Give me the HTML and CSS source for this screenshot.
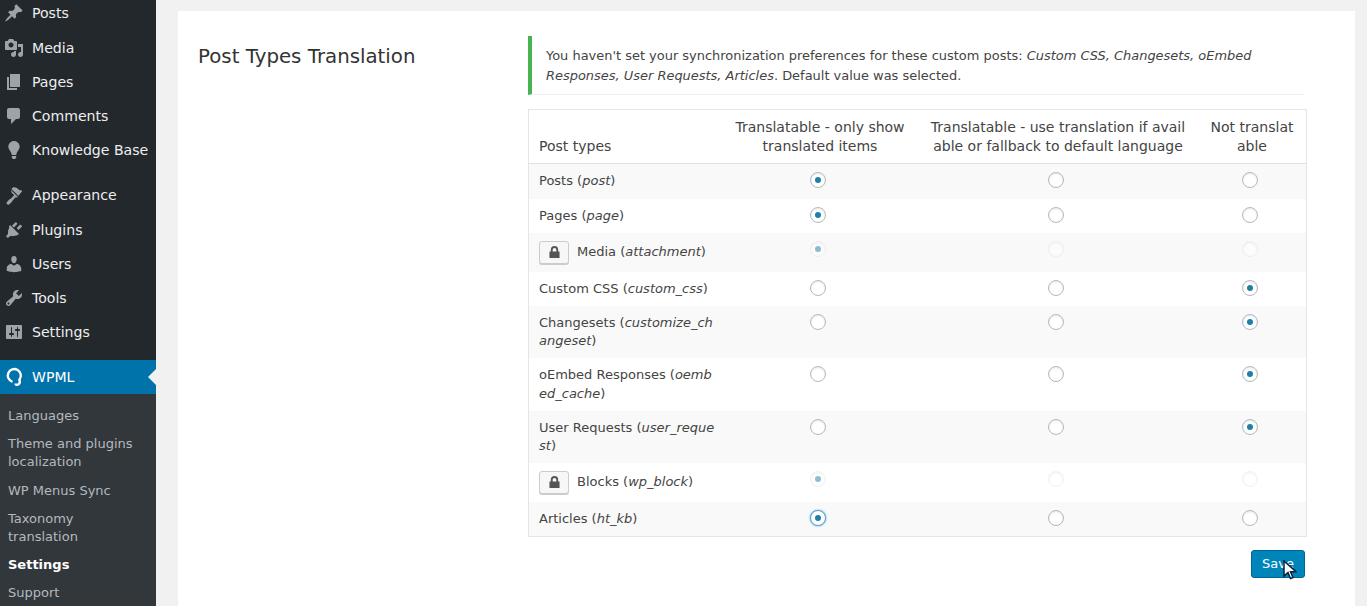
FILE: index.html
```html
<!DOCTYPE html>
<html>
    <head>
        <title>WPML Settings</title>
        <link rel="stylesheet" href="styles.css">
    </head>
    <body>
        <div class="adminwrap">
            <div class="sidebar">
                <ul class="menu">
                    <li class="menuitem first">
                        <svg class="icon" viewBox="0 0 20 20"><path d="M10.44 3.020l1.820-1.820 6.360 6.350-1.830 1.820c-1.050-.68-2.480-.57-3.410.36l-.75.75c-.92.93-1.040 2.350-.35 3.410l-1.830 1.820-2.410-2.410-2.800 2.790c-.42.42-3.380 2.710-3.800 2.290s1.860-3.390 2.280-3.810l2.790-2.790L4.100 9.360l1.830-1.820c1.050.69 2.480.57 3.400-.36l.75-.75c.93-.92 1.050-2.350.36-3.410z"/></svg>
                        <span>Posts</span>
                    </li>
                    <li class="menuitem">
                        <svg class="icon" viewBox="0 0 20 20"><path d="M13 11V4c0-.55-.45-1-1-1h-1.670L9 1H5L3.670 3H2c-.55 0-1 .45-1 1v7c0 .55.45 1 1 1h10c.55 0 1-.45 1-1zM7 4.500c1.380 0 2.500 1.120 2.500 2.500S8.380 9.500 7 9.500 4.500 8.380 4.500 7 5.620 4.500 7 4.500zM14 6h5v10.500c0 1.380-1.120 2.500-2.500 2.500S14 17.880 14 16.500s1.120-2.500 2.500-2.500c.17 0 .34.020.5.050V9h-3V6zm-4 8.050V13h2v3.500c0 1.380-1.120 2.500-2.500 2.500S7 17.880 7 16.500 8.120 14 9.500 14c.17 0 .34.020.5.050z"/></svg>
                        <span>Media</span>
                    </li>
                    <li class="menuitem">
                        <svg class="icon" viewBox="0 0 20 20"><path d="M6 15V2h10v13H6zm-1 1h8v2H3V5h2v11z"/></svg>
                        <span>Pages</span>
                    </li>
                    <li class="menuitem">
                        <svg class="icon" viewBox="0 0 20 20"><path d="M5 2h9c1.100 0 2 .9 2 2v7c0 1.100-.9 2-2 2h-2l-5 5v-5H5c-1.100 0-2-.9-2-2V4c0-1.100.9-2 2-2z"/></svg>
                        <span>Comments</span>
                    </li>
                    <li class="menuitem">
                        <svg class="icon" viewBox="0 0 20 20"><path d="M10 1c3.110 0 5.660 2.530 5.660 5.620 0 .96-.24 1.860-.68 2.640-.91 1.640-1.730 2.360-2.340 4.060-.19.51-.33 1.100-.39 1.680H7.750c-.06-.58-.2-1.170-.39-1.680-.61-1.700-1.430-2.420-2.340-4.060-.44-.78-.68-1.680-.68-2.640C4.340 3.530 6.890 1 10 1zM7.800 16h4.400v1.500l-1 1.500H8.800l-1-1.500z"/></svg>
                        <span>Knowledge Base</span>
                    </li>
                    <li class="menuitem group">
                        <svg class="icon" viewBox="0 0 20 20"><path d="M14.480 11.060L7.410 3.990l1.500-1.500c.5-.56 2.300-.47 3.510.32 1.210.8 1.430 1.280 2.660 2.010.96.55 2.340.94 2.880.5l.04 1.300c-.5.96-2.500 2.500-3.520 4.440zM6.700 4.700l7.070 7.070-1.060 1.060-.71-.71-3.180 3.180c-.4.4-.7 1-1.060 1.770L5 19.500c-.5.4-1.400.2-1.900-.3-.5-.5-.7-1.400-.3-1.900l2.400-2.800c.8-.4 1.400-.7 1.800-1.100l3.180-3.180-.71-.71-1.770-1.770z"/></svg>
                        <span>Appearance</span>
                    </li>
                    <li class="menuitem">
                        <svg class="icon" viewBox="0 0 20 20"><path d="M13.110 4.360L9.870 7.600 8 5.730l3.240-3.240c.35-.34 1.050-.2 1.560.32.52.51.66 1.210.31 1.550zm-8 1.770l.91-1.120 9.010 9.010-1.190.84c-.71.71-2.630 1.160-3.820 1.160H6.140L4.900 17.260c-.59.59-1.540.59-2.120 0-.59-.58-.59-1.530 0-2.120l1.240-1.240v-1.890c0-1.190.48-3.110 1.090-3.880zm7.560 1.970l3.240-3.240c.34-.35 1.040-.21 1.550.31.52.51.66 1.210.31 1.550l-3.240 3.250z"/></svg>
                        <span>Plugins</span>
                    </li>
                    <li class="menuitem">
                        <svg class="icon" viewBox="0 0 20 20"><path d="M10 9.250c-2.270 0-2.730-3.440-2.730-3.440C7 4.020 7.820 2 9.970 2c2.160 0 2.980 2.020 2.710 3.810 0 0-.41 3.440-2.680 3.440zm0 2.570L12.720 10c2.390 0 4.520 2.330 4.520 4.530v2.490s-3.650 1.130-7.240 1.130c-3.650 0-7.240-1.130-7.240-1.130v-2.490c0-2.250 1.940-4.480 4.470-4.480z"/></svg>
                        <span>Users</span>
                    </li>
                    <li class="menuitem">
                        <svg class="icon" viewBox="0 0 20 20"><path d="M16.680 9.770c-1.340 1.340-3.300 1.670-4.950.99l-5.410 6.520c-.99.99-2.590.99-3.570 0-.99-.98-.99-2.580 0-3.570l6.520-5.420c-.68-1.650-.35-3.610.99-4.950 1.280-1.280 3.120-1.620 4.720-1.060l-2.890 2.890 2.820 2.820 2.890-2.870c.53 1.580.18 3.420-1.120 4.650zM3.810 16.210c.4.39 1.040.39 1.430 0 .4-.4.4-1.040 0-1.440-.39-.39-1.030-.39-1.430 0-.39.4-.39 1.040 0 1.440z"/></svg>
                        <span>Tools</span>
                    </li>
                    <li class="menuitem">
                        <svg class="icon" viewBox="0 0 20 20"><path d="M18 16V4c0-.55-.45-1-1-1H3c-.55 0-1 .45-1 1v12c0 .55.45 1 1 1h14c.55 0 1-.45 1-1zM8 11h1c.55 0 1 .45 1 1s-.45 1-1 1H8v1.500c0 .28-.22.5-.5.5s-.5-.22-.5-.5V13H6c-.55 0-1-.45-1-1s.45-1 1-1h1V5.500c0-.28.22-.5.5-.5s.5.22.5.5V11zm5-2h-1c-.55 0-1-.45-1-1s.45-1 1-1h1V5.500c0-.28.22-.5.5-.5s.5.22.5.5V7h1c.55 0 1 .45 1 1s-.45 1-1 1h-1v5.500c0 .28-.22.5-.5.5s-.5-.22-.5-.5V9z"/></svg>
                        <span>Settings</span>
                    </li>
                    <li class="menuitem current">
                        <svg class="icon wpmlicon" viewBox="0 0 20 20"><path d="M8.500 14.800A6.500 6.500 0 1 1 15.500 12.500"/><path d="M15 12c1 1.800 1.200 3.800-.3 5.200-1.200 1-3.200.8-3.200-.7"/></svg>
                        <span>WPML</span>
                    </li>
                </ul>
                <ul class="submenu">
                    <li>Languages</li>
                    <li>Theme and plugins localization</li>
                    <li>WP Menus Sync</li>
                    <li>Taxonomy translation</li>
                    <li class="active">Settings</li>
                    <li>Support</li>
                </ul>
            </div>
            <div class="content">
                <div class="card">
                    <h3 class="cardtitle">Post Types Translation</h3>
                    <div class="cardbody">
                        <div class="notice">You haven't set your synchronization preferences for these custom posts: <em>Custom CSS, Changesets, oEmbed Responses, User Requests, Articles</em>. Default value was selected.</div>
                        <table class="posttable">
                            <thead>
                                <tr>
                                    <th class="namecol">Post types</th>
                                    <th class="col1">Translatable - only show translated items</th>
                                    <th class="col2">Translatable - use translation if avail<br>able or fallback to default language</th>
                                    <th class="col3">Not translat<br>able</th>
                                </tr>
                            </thead>
                            <tbody>
                                <tr class="extra">
                                    <td>Posts (<em>post</em>)</td>
                                    <td><span class="radio on"></span></td>
                                    <td><span class="radio"></span></td>
                                    <td><span class="radio"></span></td>
                                </tr>
                                <tr>
                                    <td>Pages (<em>page</em>)</td>
                                    <td><span class="radio on"></span></td>
                                    <td><span class="radio"></span></td>
                                    <td><span class="radio"></span></td>
                                </tr>
                                <tr class="locked">
                                    <td><span class="lockbtn"><svg viewBox="0 0 12 14"><path fill-rule="evenodd" d="M2 6V4a4 4 0 0 1 8 0v2h1.500v7H.5V6zM4 6h4V4a2 2 0 0 0-4 0z"/></svg></span>Media (<em>attachment</em>)</td>
                                    <td><span class="radio on off"></span></td>
                                    <td><span class="radio off"></span></td>
                                    <td><span class="radio off"></span></td>
                                </tr>
                                <tr>
                                    <td>Custom CSS (<em>custom_css</em>)</td>
                                    <td><span class="radio"></span></td>
                                    <td><span class="radio"></span></td>
                                    <td><span class="radio on"></span></td>
                                </tr>
                                <tr>
                                    <td>Changesets (<em>customize_ch<br>angeset</em>)</td>
                                    <td><span class="radio"></span></td>
                                    <td><span class="radio"></span></td>
                                    <td><span class="radio on"></span></td>
                                </tr>
                                <tr class="wide">
                                    <td>oEmbed Responses (<em>oemb<br>ed_cache</em>)</td>
                                    <td><span class="radio"></span></td>
                                    <td><span class="radio"></span></td>
                                    <td><span class="radio on"></span></td>
                                </tr>
                                <tr>
                                    <td>User Requests (<em>user_reque<br>st</em>)</td>
                                    <td><span class="radio"></span></td>
                                    <td><span class="radio"></span></td>
                                    <td><span class="radio on"></span></td>
                                </tr>
                                <tr class="locked">
                                    <td><span class="lockbtn"><svg viewBox="0 0 12 14"><path fill-rule="evenodd" d="M2 6V4a4 4 0 0 1 8 0v2h1.500v7H.5V6zM4 6h4V4a2 2 0 0 0-4 0z"/></svg></span>Blocks (<em>wp_block</em>)</td>
                                    <td><span class="radio on off"></span></td>
                                    <td><span class="radio off"></span></td>
                                    <td><span class="radio off"></span></td>
                                </tr>
                                <tr>
                                    <td>Articles (<em>ht_kb</em>)</td>
                                    <td><span class="radio on focus"></span></td>
                                    <td><span class="radio"></span></td>
                                    <td><span class="radio"></span></td>
                                </tr>
                            </tbody>
                        </table>
                        <div class="actions">
                            <span class="savebtn">Save
                                <svg class="cursor" viewBox="0 0 14 20"><path d="M1 1v15l4-3.500 2.500 6 2.500-1-2.500-5.800H13z" fill="#fff" stroke="#0a2036" stroke-width="1.500"/></svg>
                            </span>
                        </div>
                    </div>
                </div>
            </div>
        </div>
    </body>
</html>
```

FILE: styles.css
```css
html, body {
    margin: 0;
    height: 606px;
    overflow: hidden;
    background: #f1f1f1;
    font-family: "DejaVu Sans", sans-serif;
    font-size: 13px;
    color: #444;
}
ul {
    margin: 0;
    padding: 0;
    list-style: none;
}
.adminwrap {
    display: flex;
    height: 606px;
}
.sidebar {
    width: 156px;
    flex: none;
    display: flex;
    flex-direction: column;
    background: #23282d;
    color: #eee;
}
.menuitem {
    display: flex;
    align-items: center;
    height: 34px;
    font-size: 14.1px;
    position: relative;
}
.menuitem.first {
    height: 26px;
    margin-bottom: 5px;
}
.menuitem.group {
    margin-top: 11px;
    margin-bottom: 1px;
}
.menuitem .icon {
    width: 20px;
    height: 20px;
    margin: 0 8px 0 4px;
    fill: #9ea3a8;
    flex: none;
}
.menuitem.current {
    margin-top: 11px;
    background: #0073aa;
    color: #fff;
}
.menuitem.current .wpmlicon {
    fill: none;
    stroke: #fff;
    stroke-width: 2.4;
}
.menuitem.current::after {
    content: "";
    position: absolute;
    right: 0;
    top: 9px;
    border: 8px solid transparent;
    border-right-color: #f1f1f1;
    border-left-width: 0;
}
.submenu {
    flex: 1;
    background: #32373c;
    padding-top: 8px;
    color: #b4b9be;
    font-size: 13px;
    line-height: 18px;
}
.submenu li {
    padding: 5px 12px 5px 8px;
    margin-bottom: 0.3px;
}
.submenu .active {
    color: #fff;
    font-weight: bold;
}
.content {
    flex: 1;
    padding: 11px 12px 0 22px;
}
.card {
    display: flex;
    background: #fff;
    height: 640px;
    padding: 0 0 0 20px;
}
.cardtitle {
    width: 330px;
    flex: none;
    margin: 33px 0 0;
    font-size: 19.8px;
    font-weight: normal;
    color: #333;
    line-height: 26px;
}
.cardbody {
    width: 779px;
    padding-top: 25px;
}
.notice {
    box-sizing: border-box;
    width: 776px;
    height: 59px;
    border-left: 4px solid #46b450;
    border-bottom: 1px solid #eee;
    padding: 10px 12px 9px 14px;
    font-size: 12.96px;
    line-height: 20px;
}
.posttable {
    margin-top: 14px;
    width: 779px;
    border: 1px solid #e5e5e5;
    border-collapse: separate;
    border-spacing: 0;
    table-layout: fixed;
    font-size: 13px;
}
.posttable th {
    box-sizing: border-box;
    font-weight: normal;
    font-size: 14px;
    line-height: 19px;
    color: #444;
    padding: 8px 10px 7px;
    text-align: center;
    border-bottom: 1px solid #e1e1e1;
    vertical-align: bottom;
}
.posttable th.namecol {
    text-align: left;
    width: 193px;
}
.posttable .col1 {
    width: 196px;
}
.posttable .col2 {
    width: 280px;
}
.posttable td {
    padding: 8px 14px 8px 10px;
    line-height: 18px;
    text-align: center;
    color: #444;
    vertical-align: top;
}
.posttable td:first-child {
    text-align: left;
    padding-right: 0;
    white-space: nowrap;
}
.posttable tbody tr:nth-child(odd) {
    background: #f9f9f9;
}
.posttable tr.extra td {
    padding-bottom: 9px;
}
.posttable tr.wide td {
    line-height: 18.5px;
}
.posttable tr.locked td {
    box-sizing: border-box;
    height: 39px;
}
.radio {
    display: inline-block;
    box-sizing: border-box;
    width: 16px;
    height: 16px;
    border: 1px solid #b4b9be;
    border-radius: 50%;
    background: #fff;
    box-shadow: inset 0 1px 2px rgba(0,0,0,0.1);
    position: relative;
    vertical-align: top;
}
.radio.on::before {
    content: "";
    position: absolute;
    left: 4px;
    top: 4px;
    width: 6px;
    height: 6px;
    border-radius: 50%;
    background: #1e7fa8;
}
.radio.off {
    opacity: 0.5;
    border-color: #e5e5e5;
}
.radio.focus {
    border-color: #5b9dd9;
    box-shadow: 0 0 2px rgba(30,140,190,0.8);
}
.lockbtn {
    display: inline-flex;
    align-items: center;
    justify-content: center;
    box-sizing: border-box;
    width: 30px;
    height: 23px;
    margin-right: 8px;
    vertical-align: middle;
    border: 1px solid #ccc;
    border-radius: 3px;
    background: #f7f7f7;
    box-shadow: 0 1px 0 #ccc;
}
.lockbtn svg {
    width: 11px;
    height: 13px;
    fill: #555;
}
.actions {
    display: flex;
    justify-content: flex-end;
    padding: 13px 2px 0 0;
}
.savebtn {
    position: relative;
    box-sizing: border-box;
    width: 54px;
    height: 28px;
    line-height: 26px;
    text-align: center;
    background: #0085ba;
    border: 1px solid #006799;
    border-radius: 3px;
    color: #fff;
    font-size: 13px;
}
.cursor {
    position: absolute;
    left: 31px;
    top: 9px;
    width: 14px;
    height: 20px;
}
```
